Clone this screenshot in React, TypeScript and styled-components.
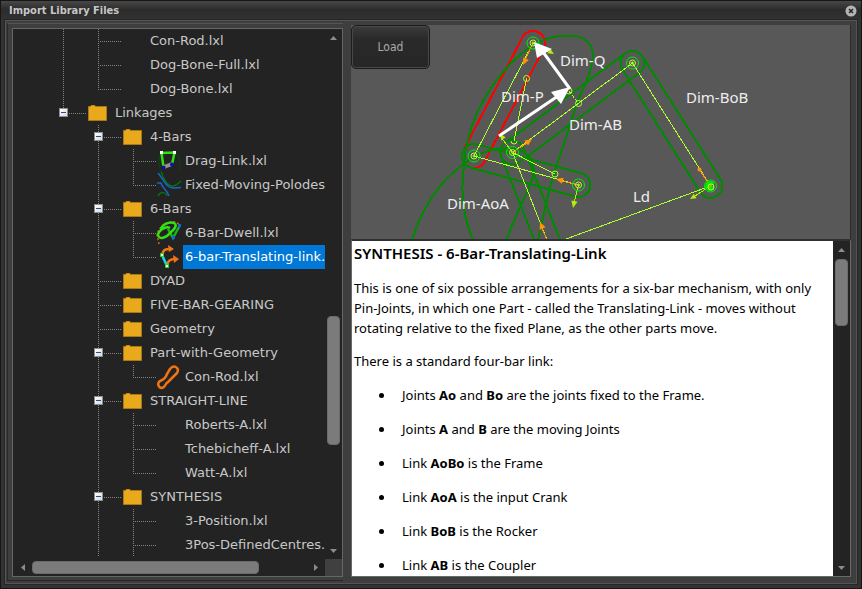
import React, { useState } from 'react';
import styled, { createGlobalStyle, css } from 'styled-components';

const Global = createGlobalStyle`
  * { box-sizing: border-box; }
  html, body, #root { height: 100%; margin: 0; }
  body { background: #333; overflow: hidden; }
`;

/* ---------- window ---------- */

const Window = styled.main`
  height: 100%;
  display: flex;
  flex-direction: column;
  padding: 0 4px 4px;
  background: #323232;
  border: 1px solid #161616;
  font-family: 'DejaVu Sans', Verdana, sans-serif;
`;

const TitleBar = styled.header`
  flex: none;
  height: 19px;
  margin: 0 -4px;
  padding: 1px 4px 0 8px;
  display: flex;
  align-items: center;
  justify-content: space-between;
  background: linear-gradient(#474747, #2c2c2c 45%, #323232);
`;

const Title = styled.h1`
  margin: 0;
  font: bold 11px/18px 'DejaVu Sans Condensed', Tahoma, sans-serif;
  color: #c6c6c6;
`;

const CloseButton = styled.button`
  width: 12px;
  height: 12px;
  padding: 0;
  border: 0;
  background: none;
  svg { display: block; }
`;

const Body = styled.div`
  flex: 1;
  min-height: 0;
  display: flex;
  gap: 8px;
  padding: 2px 5px 2px 1px;
  background: #3e3e3e;
  border: 1px solid #545454;
  outline: 1px solid #262626;
`;

const TreeGroup = styled.section`
  flex: 0 0 40%;
  min-width: 0;
  max-width: 336px;
  display: flex;
  padding: 4px 0 3px 4px;
  border-top: 1px solid #555;
  border-left: 1px solid #2a2a2a;
  border-bottom: 1px solid #262626;
`;

const TreePanel = styled.div`
  flex: 1;
  min-width: 0;
  display: grid;
  grid-template-columns: minmax(0, 1fr) 17px;
  grid-template-rows: minmax(0, 1fr) 17px;
  background: #232323;
  border: 1px solid #666;
`;

/* ---------- tree ---------- */

const Tree = styled.ul`
  margin: 0;
  padding: 0 0 0 33px;
  list-style: none;
  overflow: hidden;
`;

const TreeItem = styled.li`
  height: 24px;
  display: flex;
  align-items: center;
  white-space: nowrap;
`;

type LineKind = 'through' | 'end' | 'none';

const dotsDown = 'repeating-linear-gradient(to bottom, #838383 0 1px, transparent 1px 2px)';
const dotsRight = 'repeating-linear-gradient(to right, #838383 0 1px, transparent 1px 2px)';

const Guide = styled.span<{ $kind: LineKind }>`
  flex: none;
  width: 35px;
  height: 24px;
  ${p => p.$kind === 'through' && css`background: ${dotsDown} 17px 0 / 1px 24px no-repeat;`}
`;

const Branch = styled.span<{ $kind: LineKind }>`
  flex: none;
  width: 42px;
  height: 24px;
  padding: 7px 0 0 13px;
  background:
    ${dotsDown} 17px 0 / 1px ${p => (p.$kind === 'end' ? '13px' : '24px')} no-repeat,
    ${dotsRight} 17px 12px / 23px 1px no-repeat;
`;

const Expander = styled.button`
  display: flex;
  align-items: center;
  justify-content: center;
  width: 9px;
  height: 9px;
  padding: 0;
  border: 1px solid #8d8d8d;
  background: linear-gradient(135deg, #fff, #d9d9d9);
  svg { display: block; flex: none; }
`;

const IconSlot = styled.span`
  flex: none;
  width: 27px;
  height: 24px;
  display: flex;
  align-items: center;
  svg { flex: none; overflow: visible; }
`;

const NodeLabel = styled.button<{ $selected?: boolean }>`
  flex: none;
  height: 24px;
  margin-left: -2px;
  padding: 0 2px;
  border: 0;
  text-align: left;
  font: 13px/24px 'DejaVu Sans', Verdana, sans-serif;
  color: ${p => (p.$selected ? '#fff' : '#c8c8c8')};
  background: ${p => (p.$selected ? '#0078d7' : 'transparent')};
`;

type IconName = 'folder' | 'drag' | 'polodes' | 'dwell' | 'translating' | 'rod';

interface Row {
  label: string;
  lines: LineKind[];
  icon?: IconName;
  group?: boolean;
}

const t: LineKind = 'through';
const e: LineKind = 'end';
const n: LineKind = 'none';

const rows: Row[] = [
  { label: 'Con-Rod.lxl', lines: [t, t] },
  { label: 'Dog-Bone-Full.lxl', lines: [t, t] },
  { label: 'Dog-Bone.lxl', lines: [t, e] },
  { label: 'Linkages', lines: [e], icon: 'folder', group: true },
  { label: '4-Bars', lines: [n, t], icon: 'folder', group: true },
  { label: 'Drag-Link.lxl', lines: [n, t, t], icon: 'drag' },
  { label: 'Fixed-Moving-Polodes.lxl', lines: [n, t, e], icon: 'polodes' },
  { label: '6-Bars', lines: [n, t], icon: 'folder', group: true },
  { label: '6-Bar-Dwell.lxl', lines: [n, t, t], icon: 'dwell' },
  { label: '6-bar-Translating-link.lxl', lines: [n, t, e], icon: 'translating' },
  { label: 'DYAD', lines: [n, t], icon: 'folder' },
  { label: 'FIVE-BAR-GEARING', lines: [n, t], icon: 'folder' },
  { label: 'Geometry', lines: [n, t], icon: 'folder' },
  { label: 'Part-with-Geometry', lines: [n, t], icon: 'folder', group: true },
  { label: 'Con-Rod.lxl', lines: [n, t, e], icon: 'rod' },
  { label: 'STRAIGHT-LINE', lines: [n, t], icon: 'folder', group: true },
  { label: 'Roberts-A.lxl', lines: [n, t, t] },
  { label: 'Tchebicheff-A.lxl', lines: [n, t, t] },
  { label: 'Watt-A.lxl', lines: [n, t, e] },
  { label: 'SYNTHESIS', lines: [n, t], icon: 'folder', group: true },
  { label: '3-Position.lxl', lines: [n, t, t] },
  { label: '3Pos-DefinedCentres.lxl', lines: [n, t, t] },
];

function NodeIcon({ name }: { name: IconName }) {
  if (name === 'folder') {
    return (
      <svg width="19" height="16" viewBox="0 0 19 16">
        <path d="M0.5 1.5H3V0.5H7V1.5H18.5V15.5H0.5Z" fill="#e5a71b" stroke="#a87a14" />
        <path d="M1 2H3V0.8H7V2H18V15H1Z" fill="#e8a91c" />
      </svg>
    );
  }
  if (name === 'drag') {
    return (
      <svg width="24" height="24" viewBox="0 0 24 24" fill="none">
        <path d="M2 6C-1 16 2 22 6 25M19 5C23 10 22 17 22 21" stroke="#0b4a0b" />
        <path d="M6 18L14 15" stroke="#909090" strokeWidth="4" />
        <path d="M5.500 18L3.500 4L16.500 3.500L14 15.500" stroke="#2fe010" strokeWidth="2.500" />
        <path d="M2 2h3v3H2zM15 2h3v3h-3z" fill="#fff" />
        <circle cx="5.500" cy="18.500" r="2" fill="#1010b0" />
        <circle cx="14" cy="15.500" r="2" fill="#1010b0" />
      </svg>
    );
  }
  if (name === 'polodes') {
    return (
      <svg width="24" height="24" viewBox="0 0 24 24" fill="none">
        <path d="M3 -1C9 14 14 17 23 8" stroke="#087008" strokeWidth="1.500" />
        <path d="M0 0C6 7 9 16 16 15L23 14.500" stroke="#1766c4" strokeWidth="1.500" />
        <path d="M-1 10H3C4 15 8 15 11 23" stroke="#1766c4" strokeWidth="1.500" />
        <path d="M0 23C3 18 7 19 9 23" stroke="#087008" strokeWidth="1.500" />
      </svg>
    );
  }
  if (name === 'dwell') {
    return (
      <svg width="24" height="24" viewBox="0 0 24 24" fill="none">
        <path d="M1 23L-1 13C2 5 8 1 13 1C17 0 20 2 22 5" stroke="#e0650b" strokeDasharray="2 2" strokeWidth="1.500" />
        <path d="M10 8L15 17L21 6" stroke="#17b51b" strokeWidth="2.500" />
        <path d="M12 7C7 4 0 11 0 14C1 19 8 17 12 12C16 9 20 4 16 2C11 0 3 4 3 9" stroke="#35df15" strokeWidth="2.500" />
        <path d="M14 15h3v3h-3z M20 3h3v3h-3z" fill="#1565d8" />
      </svg>
    );
  }
  if (name === 'translating') {
    return (
      <svg width="24" height="24" viewBox="0 0 24 24" fill="none">
        <path d="M4 10C5 5 7 4 12 4M9 20C10 15 13 14 17 14" stroke="#f07414" strokeWidth="2.500" />
        <path d="M10 0L16 4L11 7zM15 10L21 14L16 18z" fill="#f07414" />
        <path d="M4 10L9 21" stroke="#18d8ea" strokeWidth="2.500" />
        <path d="M2.500 8.500h3v3h-3zM7.500 19.500h3v3h-3z" fill="#fff" stroke="#28d818" />
      </svg>
    );
  }
  return (
    <svg width="24" height="24" viewBox="0 0 24 24" fill="none">
      <path d="M12 4C16 -1 22 3 19 8L10 17C7 18 8 22 4 23C0 23 -1 18 2 16C5 15 8 12 9 9Z" stroke="#f07414" strokeWidth="2.500" strokeLinejoin="round" />
    </svg>
  );
}

/* ---------- scroll bars ---------- */

const VBar = styled.div`
  display: flex;
  flex-direction: column;
  align-items: center;
  justify-content: space-between;
  min-height: 0;
  background: #232323;
`;

const HBar = styled.div`
  display: flex;
  align-items: center;
  min-width: 0;
`;

const ArrowButton = styled.button<{ $side?: boolean }>`
  flex: none;
  width: ${p => (p.$side ? '19px' : '16px')};
  height: 17px;
  padding: 0;
  border: 0;
  display: flex;
  align-items: center;
  justify-content: center;
  background: none;
`;

const Track = styled.div<{ $before: number; $after: number }>`
  flex: 1;
  min-height: 0;
  width: 100%;
  display: flex;
  flex-direction: column;
  &::before { content: ''; flex: ${p => p.$before} 0 0; }
  &::after { content: ''; flex: ${p => p.$after} 0 0; }
`;

const Thumb = styled.div<{ $size: number }>`
  flex: ${p => p.$size} 0 0;
  width: 13px;
  margin: 0 auto;
  border-radius: 4px;
  background: #7b7b7b;
  border: 1px solid #6b6b6b;
`;

const HTrack = styled.div`
  flex: 1;
  height: 13px;
`;

const HThumb = styled.div`
  width: 83%;
  height: 13px;
  border-radius: 4px;
  background: #7b7b7b;
  border: 1px solid #6b6b6b;
`;

const Corner = styled.div`
  background: #404040;
`;

const arrows = {
  up: 'M0 4L3.500 0L7 4Z',
  down: 'M0 0L3.500 4L7 0Z',
  left: 'M4 0L0 3.500L4 7Z',
  right: 'M0 0L4 3.500L0 7Z',
};

function Arrow({ dir }: { dir: keyof typeof arrows }) {
  const side = dir === 'left' || dir === 'right';
  return (
    <ArrowButton $side={side} aria-label={`Scroll ${dir}`}>
      <svg width={side ? 4 : 7} height={side ? 7 : 4}>
        <path d={arrows[dir]} fill="#8c8c8c" />
      </svg>
    </ArrowButton>
  );
}

/* ---------- right side ---------- */

const Detail = styled.section`
  flex: 1;
  min-width: 0;
  display: flex;
  flex-direction: column;
  padding: 2px 0 4px;
`;

const Preview = styled.div`
  position: relative;
  flex: none;
  height: 214px;
  overflow: hidden;
  background: #585858;
  border-right: 1px solid #2b2b2b;
`;

const Drawing = styled.svg`
  display: block;
  width: 100%;
  height: 100%;
  text {
    font: 15px 'Noto Sans', 'Segoe UI', sans-serif;
    fill: #eee;
  }
`;

const LoadButton = styled.button`
  position: absolute;
  top: 0;
  left: 0;
  width: 79px;
  height: 44px;
  padding: 0;
  border: 1px solid #1c1c1c;
  border-radius: 5px;
  box-shadow: inset 0 0 0 1px #484848;
  background: linear-gradient(#3c3c3c, #2a2a2a 30%, #262626);
  color: #a9a9a9;
  font: 12px 'DejaVu Sans Condensed', Tahoma, sans-serif;
`;

const Notes = styled.div`
  flex: 1;
  min-height: 0;
  display: grid;
  grid-template-columns: minmax(0, 1fr) 17px;
  border: 1px solid #6a6a6a;
  border-top: 2px solid #303030;
`;

const Article = styled.article`
  overflow: hidden;
  padding: 2px 8px 0 2px;
  background: #fff;
  color: #000;
  font: 13px/20px 'Noto Sans', 'Segoe UI', sans-serif;
  h2 { margin: 0 0 15px; font-size: 15px; line-height: 20px; font-weight: 600; }
  p { margin: 0 0 13px; }
`;

const Bullets = styled.ul`
  margin: 0;
  padding: 1px 0 0 25px;
  list-style: none;
  li {
    display: flex;
    align-items: baseline;
    margin-bottom: 14px;
  }
  li::before {
    content: '';
    flex: none;
    width: 5px;
    height: 5px;
    margin-right: 18px;
    border-radius: 50%;
    background: #000;
    align-self: center;
  }
`;

type Point = [number, number];

function Capsule({ from, to, color = '#008a00' }: { from: Point; to: Point; color?: string }) {
  const dx = to[0] - from[0];
  const dy = to[1] - from[1];
  const angle = (Math.atan2(dy, dx) * 180) / Math.PI;
  return (
    <rect
      x="-12" y="-12" rx="12" height="24"
      width={Math.hypot(dx, dy) + 24}
      transform={`translate(${from[0]} ${from[1]}) rotate(${angle})`}
      stroke={color} strokeWidth="2"
    />
  );
}

function Head({ tip, angle, size, color }: { tip: Point; angle: number; size: number; color: string }) {
  return (
    <path
      d={`M0 0L${-size} ${-size * 0.45}V${size * 0.45}Z`}
      transform={`translate(${tip[0]} ${tip[1]}) rotate(${angle})`}
      fill={color}
    />
  );
}

const joints: Point[] = [[533, 43], [474, 156], [512.5, 152.5], [578.5, 185], [632.5, 63], [710.5, 186]];
const markers: Point[] = [[526.5, 78.5], [555, 174], [578.5, 103.5], [569, 91]];

function Mechanism() {
  return (
    <Drawing viewBox="351 25 500 214" preserveAspectRatio="xMinYMin slice" fill="none" role="img" aria-label="Six-bar mechanism">
      <g shapeRendering="crispEdges">
        <Capsule from={[533, 43]} to={[474, 156]} color="#ff0000" />
        <Capsule from={[474, 156]} to={[578.5, 185]} />
        <Capsule from={[512.5, 152.5]} to={[632.5, 63]} />
        <Capsule from={[632.5, 63]} to={[710.5, 186]} />
        <Capsule from={[512.5, 152.5]} to={[560, 272]} />
        <g stroke="#008a00" strokeWidth="2">
          <path d="M412 240C422 208 438 182 465 163C480 150 505 146 520 150C535 158 536 172 531 183L520 207L506 240" />
          <path d="M473 240C462 215 461 187 464 165C466 130 482 93 513 61C525 50 540 38 560 36C580 34 592 39 593 55C592 73 583 88 578 100C566 140 552 175 547 200L538 240" />
        </g>
        <g stroke="#adff2f">
          <path d="M533 43L474 156L578.500 185M526.500 78.500L514 141M512.500 152.500L555 174M512.500 152.500L632.500 63L710.500 186L566 239M512.500 152.500L547 240" />
          <path d="M569 91L578.500 103.500" strokeDasharray="3 2" />
          <path d="M533 43L548 52M578.500 185L574 203M710.500 186L695 196M512.500 152.500L501 137" stroke="#b4f000" />
        </g>
        <g stroke="#ff9500">
          <path d="M533 43L524 62M512.500 152.500L530 141M578.500 185L558 180M547 240L541 226M710.500 186L699 169" />
        </g>
      </g>
      <Head tip={[523, 65]} angle={116} size={7} color="#ff9500" />
      <Head tip={[532, 139]} angle={-35} size={7} color="#ff9500" />
      <Head tip={[556, 179]} angle={195} size={7} color="#ff9500" />
      <Head tip={[540, 222]} angle={-112} size={7} color="#ff9500" />
      <circle cx="699.500" cy="169.500" r="2" fill="#ff9500" />
      <Head tip={[573, 208]} angle={102} size={7} color="#b4f000" />
      <Head tip={[690, 199]} angle={150} size={6} color="#b4f000" />
      <Head tip={[554, 54]} angle={30} size={6} color="#b4f000" />
      <Head tip={[500, 134]} angle={-125} size={6} color="#b4f000" />
      {joints.map(([x, y]) => (
        <g key={`${x}-${y}`}>
          <circle cx={x} cy={y} r="6" stroke="#00f000" />
          <circle cx={x} cy={y} r="3" stroke="#adff2f" />
          <circle cx={x} cy={y} r="1" stroke="#adff2f" />
        </g>
      ))}
      <path d="M706 183A6 6 0 0 1 715 183L711 185L714 190L709 191L705 188Z" fill="#00f000" />
      <circle cx="711" cy="187" r="3" stroke="#adff2f" />
      <path d="M709 188L712 184" stroke="#ff9500" />
      {markers.map(([x, y]) => <circle key={x} cx={x} cy={y} r="3" stroke="#adff2f" />)}
      <path d="M511 141A3 3 0 0 0 517 141" stroke="#adff2f" />
      <g stroke="#fff" strokeWidth="3">
        <path d="M499 136L558 96M570 89L543 52" />
      </g>
      <path d="M570 87L551 92L561 104ZM534 42L537 58L552 49Z" fill="#fff" />
      <text x="560" y="66">Dim-Q</text>
      <text x="501" y="102">Dim-P</text>
      <text x="569" y="130">Dim-AB</text>
      <text x="686" y="103">Dim-BoB</text>
      <text x="447" y="209">Dim-AoA</text>
      <text x="633" y="202">Ld</text>
    </Drawing>
  );
}

export default function App() {
  const [selected, setSelected] = useState(9);
  return (
    <>
      <Global />
      <Window>
        <TitleBar>
          <Title>Import Library Files</Title>
          <CloseButton aria-label="Close">
            <svg width="12" height="12" viewBox="0 0 12 12">
              <circle cx="6" cy="6" r="5.500" fill="#b5b5b5" />
              <path d="M4 4L8 8M8 4L4 8" stroke="#222" strokeWidth="1.500" />
            </svg>
          </CloseButton>
        </TitleBar>
        <Body>
          <TreeGroup>
            <TreePanel>
              <Tree>
                {rows.map((row, i) => (
                  <TreeItem key={i}>
                    {row.lines.slice(0, -1).map((kind, k) => <Guide key={k} $kind={kind} />)}
                    <Branch $kind={row.lines[row.lines.length - 1]}>
                      {row.group && (
                        <Expander aria-label={`Collapse ${row.label}`}>
                          <svg width="5" height="1"><path d="M0 0H5V1H0Z" fill="#2b4c9b" /></svg>
                        </Expander>
                      )}
                    </Branch>
                    <IconSlot>{row.icon && <NodeIcon name={row.icon} />}</IconSlot>
                    <NodeLabel $selected={i === selected} onClick={() => setSelected(i)}>{row.label}</NodeLabel>
                  </TreeItem>
                ))}
              </Tree>
              <VBar>
                <Arrow dir="up" />
                <Track $before={271} $after={97}><Thumb $size={128} /></Track>
                <Arrow dir="down" />
              </VBar>
              <HBar>
                <Arrow dir="left" />
                <HTrack><HThumb /></HTrack>
                <Arrow dir="right" />
              </HBar>
              <Corner />
            </TreePanel>
          </TreeGroup>
          <Detail>
            <Preview>
              <Mechanism />
              <LoadButton>Load</LoadButton>
            </Preview>
            <Notes>
              <Article>
                <h2>SYNTHESIS - 6-Bar-Translating-Link</h2>
                <p>
                  This is one of six possible arrangements for a six-bar mechanism, with only
                  Pin-Joints, in which one Part - called the Translating-Link - moves without
                  rotating relative to the fixed Plane, as the other parts move.
                </p>
                <p>There is a standard four-bar link:</p>
                <Bullets>
                  <li><span>Joints <b>Ao</b> and <b>Bo</b> are the joints fixed to the Frame.</span></li>
                  <li><span>Joints <b>A</b> and <b>B</b> are the moving Joints</span></li>
                  <li><span>Link <b>AoBo</b> is the Frame</span></li>
                  <li><span>Link <b>AoA</b> is the input Crank</span></li>
                  <li><span>Link <b>BoB</b> is the Rocker</span></li>
                  <li><span>Link <b>AB</b> is the Coupler</span></li>
                </Bullets>
              </Article>
              <VBar>
                <Arrow dir="up" />
                <Track $before={1} $after={234}><Thumb $size={65} /></Track>
                <Arrow dir="down" />
              </VBar>
            </Notes>
          </Detail>
        </Body>
      </Window>
    </>
  );
}
